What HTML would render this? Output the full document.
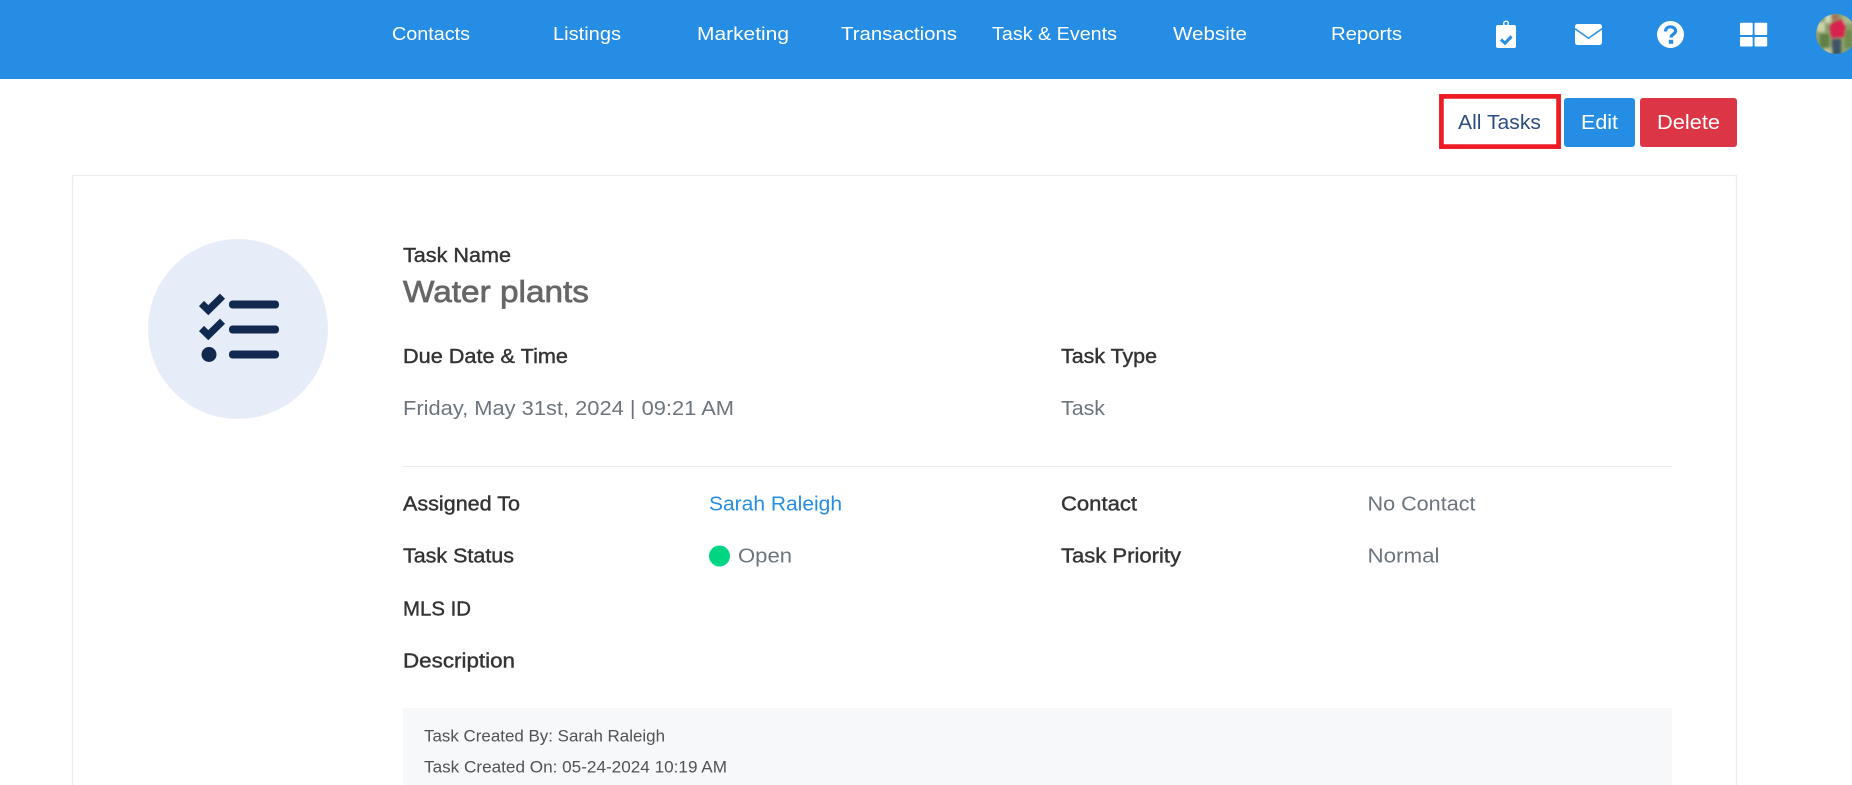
<!DOCTYPE html>
<html lang="en">
<head>
<meta charset="utf-8">
<title>Task Details</title>
<style>
html,body{margin:0;padding:0;width:1852px;height:785px;overflow:hidden;background:#fff}
svg{display:block}
text{font-family:"Liberation Sans",Arial,sans-serif}
.nav{font-size:18.5px;fill:#fff}
.lab{font-size:20px;fill:#333;stroke:#333;stroke-width:.4px}
.val{font-size:20px;fill:#6c757d}
.foot{font-size:17px;fill:#525252}
.btn{font-size:20.5px}
</style>
</head>
<body>
<svg width="1852" height="785" viewBox="0 0 1852 785" xmlns="http://www.w3.org/2000/svg">
  <defs><filter id="bl" x="-20%" y="-20%" width="140%" height="140%"><feGaussianBlur stdDeviation="1.300"/></filter></defs>
  <rect x="0" y="0" width="1852" height="79" fill="#258ee4"/>
  <text class="nav" x="392" y="40" textLength="78" lengthAdjust="spacingAndGlyphs">Contacts</text>
  <text class="nav" x="553" y="40" textLength="68" lengthAdjust="spacingAndGlyphs">Listings</text>
  <text class="nav" x="697" y="40" textLength="92" lengthAdjust="spacingAndGlyphs">Marketing</text>
  <text class="nav" x="841" y="40" textLength="116" lengthAdjust="spacingAndGlyphs">Transactions</text>
  <text class="nav" x="992" y="40" textLength="125" lengthAdjust="spacingAndGlyphs">Task &amp; Events</text>
  <text class="nav" x="1173" y="40" textLength="74" lengthAdjust="spacingAndGlyphs">Website</text>
  <text class="nav" x="1331" y="40" textLength="71" lengthAdjust="spacingAndGlyphs">Reports</text>

  <!-- clipboard -->
  <circle cx="1506" cy="23.500" r="2.300" fill="none" stroke="#fff" stroke-width="1.400"/>
  <rect x="1496" y="25" width="20" height="23" rx="2" fill="#fff"/>
  <path d="M1501 39.500l4 3.800 6.500-7" fill="none" stroke="#258ee4" stroke-width="3"/>
  <!-- mail -->
  <rect x="1575" y="24" width="27" height="21" rx="2.500" fill="#fff"/>
  <path d="M1575 28.700l13.500 9.500 13.500-9.500" fill="none" stroke="#258ee4" stroke-width="1.500"/>
  <!-- help -->
  <circle cx="1670.500" cy="34.500" r="13.500" fill="#fff"/>
  <path d="M1665.500 31.500c0-3 2.300-4.700 5-4.700 2.900 0 5.100 1.700 5.100 4.200 0 3.400-4.600 3.100-4.600 6.500" fill="none" stroke="#258ee4" stroke-width="3.200"/>
  <rect x="1668.800" y="39.800" width="4.400" height="4" fill="#258ee4"/>
  <!-- grid -->
  <rect x="1740" y="22.800" width="12.700" height="12.200" rx="1" fill="#fff"/>
  <rect x="1754.500" y="22.800" width="12.700" height="12.200" rx="1" fill="#fff"/>
  <rect x="1740" y="37" width="12.700" height="9.500" rx="1" fill="#fff"/>
  <rect x="1754.500" y="37" width="12.700" height="9.500" rx="1" fill="#fff"/>
  <!-- avatar -->
  <clipPath id="av"><circle cx="1836" cy="34" r="20"/></clipPath>
  <g clip-path="url(#av)">
    <rect x="1814" y="12" width="40" height="44" fill="#8c9f6a"/>
    <g filter="url(#bl)">
      <rect x="1817" y="22" width="8" height="10" fill="#c9d2a8"/>
      <rect x="1820" y="34" width="9" height="14" fill="#5f7f45"/>
      <rect x="1842" y="16" width="10" height="8" fill="#a8b78c"/>
      <rect x="1845" y="30" width="7" height="18" fill="#6f8b50"/>
      <rect x="1825" y="14" width="6" height="9" fill="#cfd6b6"/>
      <circle cx="1835" cy="17" r="3.500" fill="#a9705a"/>
      <path d="M1831 23l11-4 3.500 7-1 11-13 1-2-10z" fill="#d8224f"/>
      <rect x="1832" y="39" width="9" height="16" fill="#3d5468"/>
      <rect x="1824" y="48" width="8" height="6" fill="#b6bf9a"/>
    </g>
  </g>

  <!-- buttons -->
  <rect x="1441.400" y="96.400" width="117.200" height="50.200" fill="#fff" stroke="#ed1c24" stroke-width="4.700"/>
  <text class="btn" x="1458" y="129" textLength="83" lengthAdjust="spacingAndGlyphs" fill="#2b4d80">All Tasks</text>
  <rect x="1564" y="98" width="71" height="49" rx="3" fill="#258ee4"/>
  <text class="btn" x="1581" y="129" textLength="37" lengthAdjust="spacingAndGlyphs" fill="#fff">Edit</text>
  <rect x="1640" y="98" width="97" height="49" rx="3" fill="#dc3545"/>
  <text class="btn" x="1657" y="129" textLength="63" lengthAdjust="spacingAndGlyphs" fill="#fff">Delete</text>

  <!-- card -->
  <path d="M72.500 785V175.500H1736.500V785" fill="none" stroke="#eceded" stroke-width="1.300"/>

  <!-- badge -->
  <circle cx="238" cy="329" r="90" fill="#e6ecf8"/>
  <g fill="none" stroke="#12294f" stroke-width="7.200" stroke-linejoin="miter" stroke-linecap="butt">
    <path d="M201.500 303.500l6.800 6.700 14.200-14"/>
    <path d="M201.500 328.500l6.800 6.700 14.200-14"/>
  </g>
  <rect x="229" y="300.500" width="50" height="8" rx="3.500" fill="#12294f"/>
  <rect x="229" y="325.500" width="50" height="8" rx="3.500" fill="#12294f"/>
  <rect x="229" y="350.500" width="50" height="8" rx="3.500" fill="#12294f"/>
  <circle cx="209" cy="354.500" r="7.500" fill="#12294f"/>

  <!-- heading -->
  <text class="lab" x="403" y="262" textLength="108" lengthAdjust="spacingAndGlyphs">Task Name</text>
  <text x="403" y="302" font-size="31" fill="#666" stroke="#666" stroke-width=".7" textLength="186" lengthAdjust="spacingAndGlyphs">Water plants</text>

  <text class="lab" x="403" y="363" textLength="165" lengthAdjust="spacingAndGlyphs">Due Date &amp; Time</text>
  <text class="val" x="403" y="415" textLength="331" lengthAdjust="spacingAndGlyphs">Friday, May 31st, 2024 | 09:21 AM</text>
  <text class="lab" x="1061" y="363" textLength="96" lengthAdjust="spacingAndGlyphs">Task Type</text>
  <text class="val" x="1061" y="415" textLength="44" lengthAdjust="spacingAndGlyphs">Task</text>

  <rect x="403" y="466" width="1269" height="1" fill="#e9eaec"/>

  <text class="lab" x="403" y="510.500" textLength="117" lengthAdjust="spacingAndGlyphs">Assigned To</text>
  <text x="709" y="510.500" font-size="20" fill="#258ee4" textLength="133" lengthAdjust="spacingAndGlyphs">Sarah Raleigh</text>
  <text class="lab" x="1061" y="510.500" textLength="76" lengthAdjust="spacingAndGlyphs">Contact</text>
  <text class="val" x="1367.500" y="510.500" textLength="108" lengthAdjust="spacingAndGlyphs">No Contact</text>

  <text class="lab" x="403" y="562.500" textLength="111" lengthAdjust="spacingAndGlyphs">Task Status</text>
  <circle cx="719.500" cy="556" r="10.500" fill="#00d584"/>
  <text class="val" x="738" y="562.500" textLength="54" lengthAdjust="spacingAndGlyphs">Open</text>
  <text class="lab" x="1061" y="562.500" textLength="120" lengthAdjust="spacingAndGlyphs">Task Priority</text>
  <text class="val" x="1367.500" y="562.500" textLength="72" lengthAdjust="spacingAndGlyphs">Normal</text>

  <text class="lab" x="403" y="615.300" textLength="68" lengthAdjust="spacingAndGlyphs">MLS ID</text>
  <text class="lab" x="403" y="667.500" textLength="112" lengthAdjust="spacingAndGlyphs">Description</text>

  <!-- footer box -->
  <rect x="403" y="708" width="1269" height="77" fill="#f7f8fa"/>
  <text class="foot" x="424" y="741.500" textLength="241" lengthAdjust="spacingAndGlyphs">Task Created By: Sarah Raleigh</text>
  <text class="foot" x="424" y="772.500" textLength="303" lengthAdjust="spacingAndGlyphs">Task Created On: 05-24-2024 10:19 AM</text>
</svg>
</body>
</html>
